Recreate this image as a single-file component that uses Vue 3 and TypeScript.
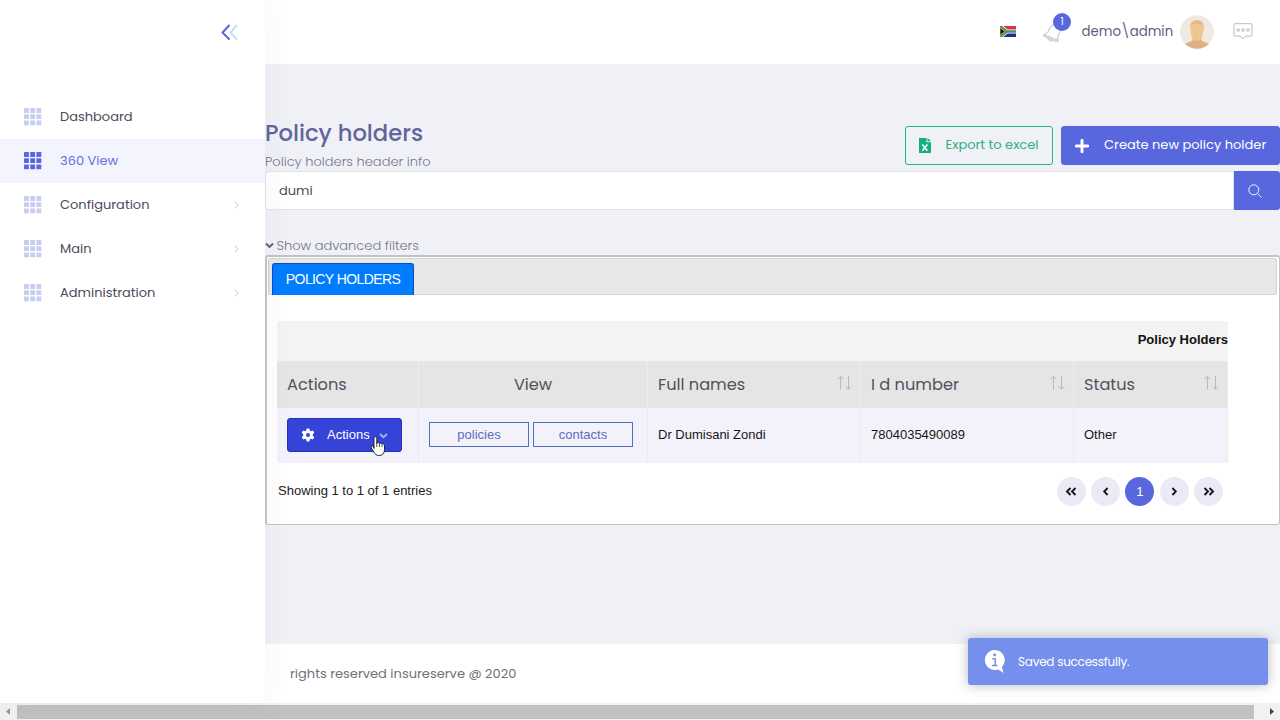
<script setup lang="ts">
interface MenuItem { label: string; active?: boolean; children?: boolean }

const menu: MenuItem[] = [
  { label: 'Dashboard' },
  { label: '360 View', active: true },
  { label: 'Configuration', children: true },
  { label: 'Main', children: true },
  { label: 'Administration', children: true },
]
const cells: number[] = [0, 6.2, 12.4]
const columns: { label: string; cls: string; sortable: boolean }[] = [
  { label: 'Actions', cls: 'c-actions', sortable: false },
  { label: 'View', cls: 'c-view', sortable: false },
  { label: 'Full names', cls: 'c-names', sortable: true },
  { label: 'I d number', cls: 'c-id', sortable: true },
  { label: 'Status', cls: 'c-status', sortable: true },
]
const pages: { d?: string; label?: string }[] = [
  { d: 'M5.500 2 2 5.500 5.500 9M10.500 2 7 5.500 10.500 9' },
  { d: 'M7.600 2 4.200 5.500 7.600 9' },
  { label: '1' },
  { d: 'M4.400 2 7.800 5.500 4.400 9' },
  { d: 'M1.500 2 5 5.500 1.500 9M6.500 2 10 5.500 6.500 9' },
]
</script>

<template>
  <div class="screen">
    <div class="body">
      <aside class="sidebar">
        <div class="brand">
          <svg width="18" height="17" viewBox="0 0 18 17" fill="none" stroke-width="2" stroke-linecap="round" stroke-linejoin="round">
            <path d="M15.5 1.5 9.5 8.5l6 6.5" stroke="#d3d7f6" />
            <path d="M8 1.5 1.5 8.5 8 15" stroke="#5867dd" />
          </svg>
        </div>
        <nav>
          <a v-for="m in menu" :key="m.label" class="item" :class="{ active: m.active }">
            <svg class="grid" width="18" height="18" viewBox="0 0 18 18">
              <template v-for="y in cells" :key="y">
                <rect v-for="x in cells" :key="x" :x="x" :y="y" width="4.9" height="4.9" rx=".5" />
              </template>
            </svg>
            <span class="pop">{{ m.label }}</span>
            <svg v-if="m.children" class="arrow" width="5" height="8" viewBox="0 0 5 8" fill="none"><path d="M.7.7 4.2 4 .7 7.3" stroke="#c4c7d6" /></svg>
          </a>
        </nav>
      </aside>

      <div class="main">
        <header class="topbar">
          <svg class="flag" width="16" height="11" viewBox="0 0 16 11">
            <rect width="16" height="5.5" fill="#d9363f" />
            <rect y="5.5" width="16" height="5.5" fill="#1b2d96" />
            <path d="M0 0 7 5.5 0 11M6 5.5H16" stroke="#fff" stroke-width="4" fill="none" />
            <path d="M0 0 7 5.5 0 11M6 5.5H16" stroke="#4a9468" stroke-width="2.4" fill="none" />
            <path d="M0 1.6 5 5.5 0 9.4Z" fill="#1a1a12" stroke="#e3ad2b" stroke-width=".9" />
          </svg>
          <div class="bell">
            <svg width="18" height="20" viewBox="0 0 18 20" fill="none" stroke="#b9bac3" stroke-width="1">
              <path d="M1 12.6C5 11.400 5.600 8 7.500 5c1.700-2.600 5-3.500 7.600-1.800s3 4.500 1.600 7.300c-1.500 3-2.900 5.300-1.500 8z" />
              <path d="M1 12.600l-.3 1.500 13.700 6 .8-1.600M5 16.100c-.2 2.500 2.900 3.900 4.500 2" />
            </svg>
            <span class="badge">1</span>
          </div>
          <span class="user pop">demo\admin</span>
          <svg class="avatar" width="34" height="34" viewBox="0 0 34 34">
            <defs><clipPath id="avatarClip"><circle cx="17" cy="17" r="16.800" /></clipPath></defs>
            <g clip-path="url(#avatarClip)">
              <rect width="34" height="34" fill="#f1e8e2" />
              <path d="M3 34c0-5 3-6 7-7.300 2.500-.8 3-1.700 3-4.700h8c0 3 .5 3.900 3 4.700 4 1.300 7 2.300 7 7.300z" fill="#dfb083" />
              <path d="M10.600 12c0-4.500 2.700-6.500 6.400-6.500s6.400 2 6.400 6.500c0 6-.6 14-6.400 14s-6.400-8-6.400-14z" fill="#f0c590" />
              <path d="M10.200 16c-.9-8.300 2.300-10.800 6.800-10.800s7.700 2.500 6.800 10.800c-.5-3-.6-5.500-1.400-7-2.700.6-8.100.6-10.800 0-.8 1.500-.9 4-1.400 7z" fill="#e6b981" />
            </g>
          </svg>
          <svg class="chat" width="20" height="17" viewBox="0 0 20 17" fill="none" stroke="#b9bac3">
            <path d="M2 .7h16q1 0 1 1v10.400q0 1-1 1h-5.300L9.900 15.700l-2.800-2.600H2q-1 0-1-1V1.700q0-1 1-1z" />
            <circle cx="5.200" cy="7" r="1.300" /><circle cx="10" cy="7" r="1.300" /><circle cx="14.800" cy="7" r="1.300" />
          </svg>
        </header>

        <main class="content">
          <div class="heading">
            <div>
              <h1 class="title pop">Policy holders</h1>
              <p class="sub pop">Policy holders header info</p>
            </div>
            <div class="buttons">
              <button class="export pop">
                <svg width="12" height="15" viewBox="0 0 12 15"><path d="M0 0h7.500v4.200H12V15H0z" fill="#13b07d" /><path d="M8.500 0 12 3.300H8.500z" fill="#13b07d" /><path d="M3.300 6.600 8.400 12.800M8.400 6.600 3.300 12.800" stroke="#fff" stroke-width="1.600" /></svg>
                <span>Export to excel</span>
              </button>
              <button class="create pop">
                <svg width="14" height="14" viewBox="0 0 14 14"><path d="M7 1.200v11.600M1.200 7h11.600" stroke="#fff" stroke-width="2.900" stroke-linecap="round" /></svg>
                <span>Create new policy holder</span>
              </button>
            </div>
          </div>

          <div class="search">
            <div class="field pop">dumi</div>
            <button class="go">
              <svg width="14" height="14" viewBox="0 0 14 14" fill="none" stroke="#fff" stroke-width=".9"><circle cx="5.800" cy="5.800" r="5" /><path d="m9.500 9.500 4 4" /></svg>
            </button>
          </div>

          <div class="filters">
            <svg width="9" height="7" viewBox="0 0 9 7" fill="none"><path d="m1 1.500 3.500 3.400L8 1.500" stroke="#5d5f6d" stroke-width="1.900" /></svg>
            <span class="pop">Show advanced filters</span>
          </div>

          <section class="card">
            <div class="tabs"><div class="tab">POLICY HOLDERS</div></div>
            <div class="table">
              <div class="caption">Policy Holders</div>
              <div class="row head">
                <div v-for="c in columns" :key="c.label" class="cell" :class="c.cls">
                  <span class="pop">{{ c.label }}</span>
                  <svg v-if="c.sortable" width="15" height="16" viewBox="0 0 15 16" fill="none" stroke="#b9b9bd"><path d="M3.500 14.500v-13M.8 4.200l2.700-3 2.700 3M11.500 1v13M8.800 11.300l2.700 3 2.700-3" /></svg>
                </div>
              </div>
              <div class="row data">
                <div class="cell">
                  <button class="actions">
                    <svg width="14" height="14" viewBox="-7 -7 14 14"><g fill="#fff"><circle r="4.800" /><rect v-for="a in [0, 60, 120]" :key="a" x="-1.600" y="-6.500" width="3.200" height="13" rx=".8" :transform="`rotate(${a})`" /></g><circle r="2" fill="#3543d8" /></svg>
                    <span>Actions</span>
                    <svg class="caret" width="9" height="6" viewBox="0 0 9 6" fill="none"><path d="m1 1 3.500 3.200L8 1" stroke="#a9b2f5" stroke-width="1.900" /></svg>
                  </button>
                </div>
                <div class="cell pair"><button>policies</button><button>contacts</button></div>
                <div class="cell">Dr Dumisani Zondi</div>
                <div class="cell">7804035490089</div>
                <div class="cell">Other</div>
              </div>
            </div>
            <div class="pager">
              <span class="info">Showing 1 to 1 of 1 entries</span>
              <div class="pages">
                <span v-for="(p, i) in pages" :key="i" class="page" :class="{ current: p.label }">
                  <template v-if="p.label">{{ p.label }}</template>
                  <svg v-else width="12" height="11" viewBox="0 0 12 11" fill="none"><path :d="p.d" stroke="#17171d" stroke-width="1.900" /></svg>
                </span>
              </div>
            </div>
          </section>
        </main>

        <footer class="footer pop"><span>rights reserved insureserve @ 2020</span></footer>
      </div>
    </div>

    <div class="scrollbar">
      <svg width="17" height="17" viewBox="0 0 17 17"><path d="M10 5v7L6 8.500z" fill="#999" /></svg>
      <div class="thumb"></div>
      <svg width="25" height="17" viewBox="0 0 25 17"><path d="M15 5v7l4-3.500z" fill="#444" /></svg>
    </div>

    <div class="toast">
      <svg width="22" height="25" viewBox="0 0 22 25">
        <path d="M10.500 1a10 10 0 0 1 7.300 17l1.700 6-5.200-3.600A10 10 0 1 1 10.500 1z" fill="#fff" />
        <circle cx="10.700" cy="6" r="1.400" fill="#748fec" />
        <path d="M8.300 9.700h2.900v6.500M8 16.500h5.400" stroke="#748fec" stroke-width="1.500" fill="none" />
      </svg>
      <span class="pop">Saved successfully.</span>
    </div>

    <svg class="cursor" width="16" height="21" viewBox="0 0 16 21">
      <path d="M4 12.500V2.300C4 .3 6.800.3 6.800 2.300v5c.5-1.200 2.500-.9 2.700.4.600-1 2.300-.7 2.500.6.800-.9 2.500-.3 2.500 1.200v4.300c0 3-1.700 5.700-5.200 5.700-3 0-4.200-1.200-5.400-3.400L1.200 12c-.8-1.500 1-2.600 2-1.400z" fill="#fff" stroke="#222" stroke-width="1" />
      <path d="M6.800 7v4M9.500 8v3M12 8.700V11" stroke="#222" stroke-width=".8" />
    </svg>
  </div>
</template>

<style>
body { margin: 0; overflow: hidden; }
</style>
<style scoped>
* { box-sizing: border-box; }
.screen { position: relative; width: 1280px; height: 720px; overflow: hidden; display: flex; flex-direction: column; background: #fff; font: 13px "Liberation Sans", Arial, sans-serif; color: #212121; }
button { font: inherit; margin: 0; padding: 0; }
svg { flex: none; display: block; }
.pop { font-family: Poppins, Inter, sans-serif; font-weight: 300; white-space: nowrap; }
.body { display: flex; height: 703px; }
.sidebar { width: 265px; flex: none; background: #fff; box-shadow: 0 0 28px rgba(82, 63, 105, .05); z-index: 1; }
.brand { height: 95px; padding: 24px 0 0 221px; }
.item { display: flex; align-items: center; height: 44px; padding: 0 26px 0 24px; color: #494b5a; font-size: 13px; }
.item .pop { font-weight: 400; }
.item.active { background: #f3f4fd; color: #6371de; }
.grid { fill: #c8cdf1; margin: 0 18px 0 0; }
.active .grid { fill: #5867dd; }
.arrow { margin: 0 0 0 auto; }
.main { width: 1015px; display: flex; flex-direction: column; background: #f0f1f7; }
.topbar { height: 64px; background: #fff; display: flex; align-items: center; padding-left: 735px; }
.flag { margin-top: -1px; }
.bell { position: relative; margin: -1px 0 0 27px; width: 18px; height: 20px; }
.badge { position: absolute; left: 10px; top: -9px; width: 18px; height: 18px; border-radius: 50%; background: #5867dd; color: #fff; font: 400 10px/18px Poppins, Inter, sans-serif; text-align: center; }
.user { margin-left: 20.500px; width: 98.500px; font-size: 13.300px; color: #5c5f80; font-weight: 400; }
.chat { margin-left: 19px; margin-top: -2px; }
.content { flex: 1; }
.heading { height: 107px; display: flex; justify-content: space-between; }
.title { margin: 53px 0 0; font-size: 22.700px; line-height: 32px; font-weight: 500; color: #62659a; }
.sub { margin: 3px 0 0; font-size: 13px; line-height: 20px; color: #747789; }
.buttons { display: flex; gap: 8px; padding-top: 62px; }
.buttons button { height: 39px; border-radius: 3px; display: flex; align-items: center; font-size: 13px; }
.buttons span { margin-top: -1px; font-weight: 400; }
.export { width: 148px; border: 1px solid #20b584; background: transparent; color: #2fae82; padding-left: 13px; }
.export span { margin-left: 14.500px; }
.create { width: 219px; border: 1px solid #5867dd; background: #5867dd; color: #fff; padding-left: 13px; }
.create span { margin-left: 15px; }
.search { display: flex; height: 39px; }
.field { width: 969px; height: 39px; border: 1px solid #e2e4ed; border-radius: 4px 0 0 4px; background: #fff; padding-left: 13px; line-height: 37px; font-size: 13px; font-weight: 400; color: #494b54; }
.go { width: 46px; border: 0; border-radius: 0 3px 3px 0; background: #5867dd; display: flex; align-items: center; padding-left: 14px; }
.filters { display: flex; align-items: center; gap: 2.500px; height: 45px; padding-top: 26px; font-size: 13px; color: #747684; }
.card { height: 270px; border: 2px solid #c3c3c7; border-bottom-width: 1px; border-right-width: 1px; border-radius: 3px; background: #fff; padding: 1px 2px 0 1px; }
.tabs { height: 37px; background: #e7e7e6; border: 1px solid #d3d3d3; border-radius: 2px; padding: 4px 0 0 3px; }
.tab { width: 142px; height: 32px; background: #007dff; border: 1px solid #0b4bd0; border-bottom: 0; border-radius: 3px 3px 0 0; color: #fff; font-size: 14px; letter-spacing: -.6px; line-height: 30px; text-align: center; }
.table { width: 951px; margin: 26px 0 0 9px; }
.caption { height: 40px; background: #f3f3f3; font-weight: 700; text-align: right; line-height: 38px; color: #111; }
.row { display: grid; grid-template-columns: 142px 229px 213px 213px 154px; }
.cell { display: flex; align-items: center; padding-left: 10px; border-right: 1px solid #ebebf2; }
.head { height: 47px; background: #e5e5e5; color: #50525d; }
.head .pop { font-weight: 400; font-size: 16.200px; }
.head .cell { justify-content: space-between; padding-right: 8px; }
.head .c-view { justify-content: center; padding: 0; }
.head .cell svg { margin-top: -3px; }
.data { height: 55px; background: #f3f2fb; color: #161618; }
.data .cell { padding-bottom: 2px; }
.actions { width: 115px; height: 34px; display: flex; align-items: center; padding-left: 13px; background: #3543d8; border: 1px solid #2432b8; border-radius: 3px; color: #fff; }
.actions span { margin-left: 12px; }
.caret { margin: 2px 0 0 9px; }
.pair { gap: 4px; }
.pair button { width: 100px; height: 25px; border: 1px solid #5072bd; background: transparent; color: #5b6cc0; }
.pager { display: flex; justify-content: space-between; align-items: center; height: 29px; margin: 14px 54px 0 10px; }
.info { margin-top: -3px; }
.pages { display: flex; gap: 5.300px; }
.page { width: 29px; height: 29px; border-radius: 50%; background: #ebe9f6; display: flex; align-items: center; justify-content: center; }
.page.current { background: #5867dd; color: #fff; }
.footer { height: 59px; background: #fff; padding-left: 25px; font-size: 13px; line-height: 59px; color: #6f717a; font-weight: 400; }
.scrollbar { display: flex; height: 17px; background: #f1f1f1; }
.thumb { height: 14px; margin-top: 2px; flex: 1; margin-right: 1px; background: #c1c1c1; }
.toast { position: absolute; left: 968px; top: 638px; width: 300px; height: 47px; border-radius: 3px; background: #748fec; box-shadow: 0 0 12px rgba(100, 100, 110, .45); display: flex; align-items: center; padding-left: 16px; gap: 12px; color: #fff; font-size: 12px; z-index: 2; }
.toast .pop { font-weight: 400; letter-spacing: -.25px; }
.cursor { position: absolute; left: 370px; top: 436px; z-index: 2; }
</style>
